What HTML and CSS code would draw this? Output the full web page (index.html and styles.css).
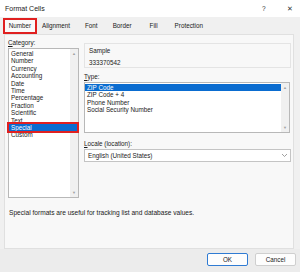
FILE: index.html
```html
<!DOCTYPE html>
<html lang="en">
<head>
  <meta charset="UTF-8">
  <title>Format Cells</title>
  <link rel="stylesheet" href="styles.css">
</head>
<body>
  <div class="dialog">
    <div class="titlebar">
      <span class="title">Format Cells</span>
      <span class="help">?</span>
      <span class="close">&#x2715;</span>
    </div>

    <div class="tabs">
      <span class="tab active">Number</span>
      <span class="tab">Alignment</span>
      <span class="tab">Font</span>
      <span class="tab">Border</span>
      <span class="tab">Fill</span>
      <span class="tab">Protection</span>
    </div>

    <div class="panel">
      <div class="columns">
        <div class="left">
          <div class="label"><u>C</u>ategory:</div>
          <div class="catlist">
            <div class="items">
              <div class="item">General</div>
              <div class="item">Number</div>
              <div class="item">Currency</div>
              <div class="item">Accounting</div>
              <div class="item">Date</div>
              <div class="item">Time</div>
              <div class="item">Percentage</div>
              <div class="item">Fraction</div>
              <div class="item">Scientific</div>
              <div class="item">Text</div>
              <div class="item selected marked">Special</div>
              <div class="item">Custom</div>
            </div>
            <div class="scrollbar">
              <span class="arrow">&#9650;</span>
              <span class="arrow">&#9660;</span>
            </div>
          </div>
        </div>

        <div class="right">
          <div class="sample">
            <div class="sample-label">Sample</div>
            <div class="sample-value">333370542</div>
          </div>

          <div class="label"><u>T</u>ype:</div>
          <div class="typelist">
            <div class="items">
              <div class="item selected">ZIP Code</div>
              <div class="item">ZIP Code + 4</div>
              <div class="item">Phone Number</div>
              <div class="item">Social Security Number</div>
            </div>
            <div class="scrollbar">
              <span class="arrow">&#9650;</span>
              <span class="arrow">&#9660;</span>
            </div>
          </div>

          <div class="label"><u>L</u>ocale (location):</div>
          <div class="dropdown">
            <span>English (United States)</span>
            <svg class="chev" width="7" height="5" viewBox="0 0 7 5">
              <path d="M1 1 L3.5 3.5 L6 1" fill="none" stroke="#888" stroke-width="0.8"/>
            </svg>
          </div>
        </div>
      </div>

      <p class="desc">Special formats are useful for tracking list and database values.</p>
    </div>

    <div class="footer">
      <button class="btn primary">OK</button>
      <button class="btn">Cancel</button>
    </div>
  </div>
</body>
</html>
```

FILE: styles.css
```css
* {
  box-sizing: border-box;
}

body {
  margin: 0;
  width: 300px;
  height: 272px;
  font-family: "Liberation Sans", Arial, sans-serif;
  font-size: 6.3px;
  color: #1a1a1a;
  background: #ececec;
  overflow: hidden;
}

.dialog {
  width: 300px;
  height: 272px;
  display: flex;
  flex-direction: column;
  background: #f0f0f0;
}

.titlebar {
  height: 17px;
  background: #ffffff;
  display: flex;
  align-items: center;
  padding: 0 0 0 5px;
  font-size: 7px;
}

.title {
  flex: 1;
}

.help {
  width: 10px;
  margin-right: 15px;
  font-size: 6.5px;
  color: #333;
}

.close {
  width: 13px;
  font-size: 6.5px;
  color: #333;
}

.tabs {
  height: 17px;
  display: flex;
  align-items: center;
  padding-left: 4px;
  background: #f0f0f0;
}

.tab {
  line-height: 10px;
  padding: 2px 0;
}

.tab.active {
  width: 32px;
  text-align: center;
  outline: 2px solid #e02020;
  outline-offset: -1px;
  background: #fafafa;
}

.tab:nth-child(2) { margin-left: 6px; }
.tab:nth-child(3) { margin-left: 15px; }
.tab:nth-child(4) { margin-left: 15px; }
.tab:nth-child(5) { margin-left: 18px; }
.tab:nth-child(6) { margin-left: 17px; }

.panel {
  margin: 0 6px 0 4px;
  height: 215px;
  background: #f8f8f8;
  border: 1px solid #e0e0e0;
  padding: 3px 2px 0 3px;
}

.columns {
  display: flex;
  gap: 5px;
}

.left {
  width: 71px;
}

.right {
  flex: 1;
  padding-top: 5px;
}

.label {
  line-height: 9px;
  margin-bottom: 1px;
}

.catlist,
.typelist {
  display: flex;
  background: #ffffff;
  border: 1px solid #b8b8b8;
}

.catlist {
  height: 150px;
}

.typelist {
  height: 51px;
  margin-bottom: 6px;
  margin-right: 1px;
}

.items {
  flex: 1;
  padding-top: 1px;
}

.item {
  height: 7.4px;
  line-height: 7.4px;
  padding-left: 2px;
  white-space: nowrap;
}

.item.selected {
  background: #0a6cd0;
  color: #ffffff;
}

.item.marked {
  outline: 2px solid #e02020;
  margin-right: -7px;
  position: relative;
}

.scrollbar {
  width: 8px;
  background: #f0f0f0;
  display: flex;
  flex-direction: column;
  justify-content: space-between;
  align-items: center;
  padding: 2px 0;
}

.arrow {
  font-size: 4px;
  color: #a0a0a0;
  line-height: 5px;
}

.sample {
  height: 25px;
  border: 1px solid #e4e4e4;
  padding: 2px 0 0 4px;
  margin-bottom: 4px;
}

.sample-label {
  line-height: 9px;
}

.sample-value {
  line-height: 9px;
  margin-top: 3px;
}

.dropdown {
  height: 13px;
  background: #ffffff;
  border: 1px solid #c4c4c4;
  display: flex;
  align-items: center;
  justify-content: space-between;
  padding: 0 2px 0 3px;
}

.chev {
  display: block;
}

.desc {
  margin: 10px 0 0 1px;
  line-height: 9px;
  font-size: 6.6px;
}

.footer {
  flex: 1;
  display: flex;
  justify-content: flex-end;
  align-items: center;
  gap: 7px;
  padding: 0 4px 2px 0;
  background: #ececec;
}

.btn {
  width: 41px;
  height: 13px;
  padding: 0;
  font-family: inherit;
  font-size: 6.3px;
  color: #1a1a1a;
  background: #fdfdfd;
  border: 1px solid #cfcfcf;
  border-radius: 2px;
}

.btn.primary {
  border: 1px solid #2f7bd3;
}
```
